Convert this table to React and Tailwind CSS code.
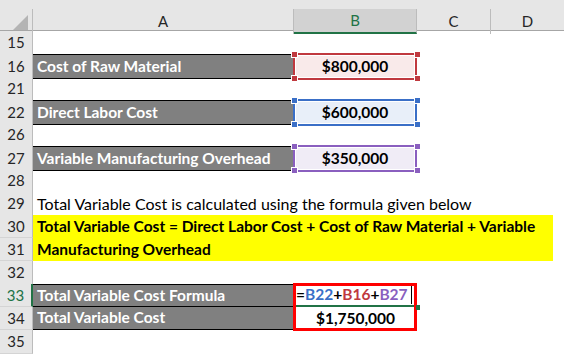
import React from "react";

const COLS = "grid grid-cols-[33px_261px_123px_74px_1fr]";

const RowNum = ({ n, active }) => (
  <div
    className={`flex h-full items-center justify-center border-b border-[#d4d4d4] bg-[#e6e6e6] text-[15px] ${
      active
        ? "border-r-2 border-r-[#217346] text-[#217346]"
        : "border-r border-r-[#bcbcbc] text-[#262626]"
    }`}
  >
    {n}
  </div>
);

const Handles = ({ color }) => (
  <>
    <span className={`absolute -left-[3px] -top-[3px] h-[7px] w-[7px] border border-white ${color}`} />
    <span className={`absolute -right-[4px] -top-[3px] h-[7px] w-[7px] border border-white ${color}`} />
    <span className={`absolute -left-[3px] -bottom-[3px] h-[7px] w-[7px] border border-white ${color}`} />
    <span className={`absolute -right-[4px] -bottom-[3px] h-[7px] w-[7px] border border-white ${color}`} />
  </>
);

const LabelCell = ({ children, top = true }) => (
  <div
    className={`flex h-full w-full items-center border-b border-r border-black bg-[#808080] pl-[4px] text-[15.5px] font-bold text-white ${
      top ? "border-t" : ""
    }`}
  >
    {children}
  </div>
);

const ValueCell = ({ value, border, fill, handle }) => (
  <div className="relative">
    <div
      className={`absolute -inset-y-[1px] -left-[1px] right-0 flex items-center justify-center border-2 ${border} ${fill} outline outline-1 -outline-offset-[3px] outline-white text-[15.5px] font-bold text-black`}
    >
      {value}
    </div>
    <Handles color={handle} />
  </div>
);

const Blank = ({ n }) => (
  <div className={`${COLS} h-[23px]`}>
    <RowNum n={n} />
    <div />
  </div>
);

export default function App() {
  return (
    <div className="h-[354px] w-[564px] overflow-hidden bg-white font-['Lato','Liberation_Sans',sans-serif] text-black">
      {/* column headers */}
      <div className={`${COLS} h-[31px] border-b border-[#a6a6a6] bg-[#e6e6e6] pt-[9px]`}>
        <div className="relative border-r border-[#bcbcbc]">
          <div className="absolute bottom-[4px] right-[4px] h-0 w-0 border-b-[15px] border-l-[15px] border-b-[#b4b4b4] border-l-transparent" />
        </div>
        <div className="flex items-center justify-center border-r border-[#bcbcbc] text-[15px] text-[#262626]">A</div>
        <div className="flex items-center justify-center border-b-2 border-r border-b-[#217346] border-r-[#bcbcbc] bg-[#d2d2d2] text-[15px] text-[#217346]">B</div>
        <div className="flex items-center justify-center border-r border-[#bcbcbc] text-[15px] text-[#262626]">C</div>
        <div className="flex items-center justify-center pr-[3px] text-[15px] text-[#262626]">
          <span className="w-[73px] text-center">D</span>
        </div>
      </div>

      <Blank n={15} />

      <div className={`${COLS} h-[23px]`}>
        <RowNum n={16} />
        <LabelCell>Cost of Raw Material</LabelCell>
        <ValueCell value="$800,000" border="border-[#c0393f]" fill="bg-[#f9eaea]" handle="bg-[#c0393f]" />
      </div>

      <Blank n={21} />

      <div className={`${COLS} h-[23px]`}>
        <RowNum n={22} />
        <LabelCell>Direct Labor Cost</LabelCell>
        <ValueCell value="$600,000" border="border-[#3a6fc7]" fill="bg-[#e8eff9]" handle="bg-[#3a6fc7]" />
      </div>

      <Blank n={26} />

      <div className={`${COLS} h-[23px]`}>
        <RowNum n={27} />
        <LabelCell>Variable Manufacturing Overhead</LabelCell>
        <ValueCell value="$350,000" border="border-[#8a5fbf]" fill="bg-[#f0ecf6]" handle="bg-[#8a5fbf]" />
      </div>

      <Blank n={28} />

      <div className={`${COLS} h-[23px]`}>
        <RowNum n={29} />
        <div className="col-span-4 flex items-center whitespace-nowrap pl-[4px] text-[16px]">
          Total Variable Cost is calculated using the formula given below
        </div>
      </div>

      <div className="grid grid-cols-[33px_520px_1fr]">
        <div className="flex flex-col">
          <div className="h-[23px]"><RowNum n={30} /></div>
          <div className="h-[23px]"><RowNum n={31} /></div>
        </div>
        <div className="flex flex-col justify-center bg-[#ffff00] pl-[4px] text-[15.5px] font-bold leading-[23px]">
          <span className="whitespace-nowrap">
            Total Variable Cost = Direct Labor Cost + Cost of Raw Material + Variable
          </span>
          <span>Manufacturing Overhead</span>
        </div>
      </div>

      <Blank n={32} />

      <div className={COLS}>
        <div className="flex flex-col">
          <div className="h-[23px]"><RowNum n={33} active /></div>
          <div className="h-[23px]"><RowNum n={34} /></div>
        </div>
        <div className="flex flex-col">
          <div className="h-[23px]"><LabelCell>Total Variable Cost Formula</LabelCell></div>
          <div className="h-[23px]"><LabelCell top={false}>Total Variable Cost</LabelCell></div>
        </div>
        <div className="relative flex flex-col">
          <div className="flex h-[23px] items-center border-b-2 border-[#217346] pl-[2px] text-[15.5px] font-bold">
            <span>=</span>
            <span className="text-[#3a6fc7]">B22</span>
            <span>+</span>
            <span className="text-[#c0393f]">B16</span>
            <span>+</span>
            <span className="text-[#8a5fbf]">B27</span>
            <span className="ml-[3px] h-[18px] w-px bg-black" />
          </div>
          <div className="flex h-[23px] items-center justify-center text-[15.5px] font-bold">$1,750,000</div>
          <div className="pointer-events-none absolute -inset-y-[1px] -left-[1px] right-0 border-[3px] border-[#ff0000]" />
          <span className="absolute right-[-3px] top-[21px] h-[5px] w-[4px] bg-[#217346]" />
        </div>
      </div>

      <Blank n={35} />
    </div>
  );
}
